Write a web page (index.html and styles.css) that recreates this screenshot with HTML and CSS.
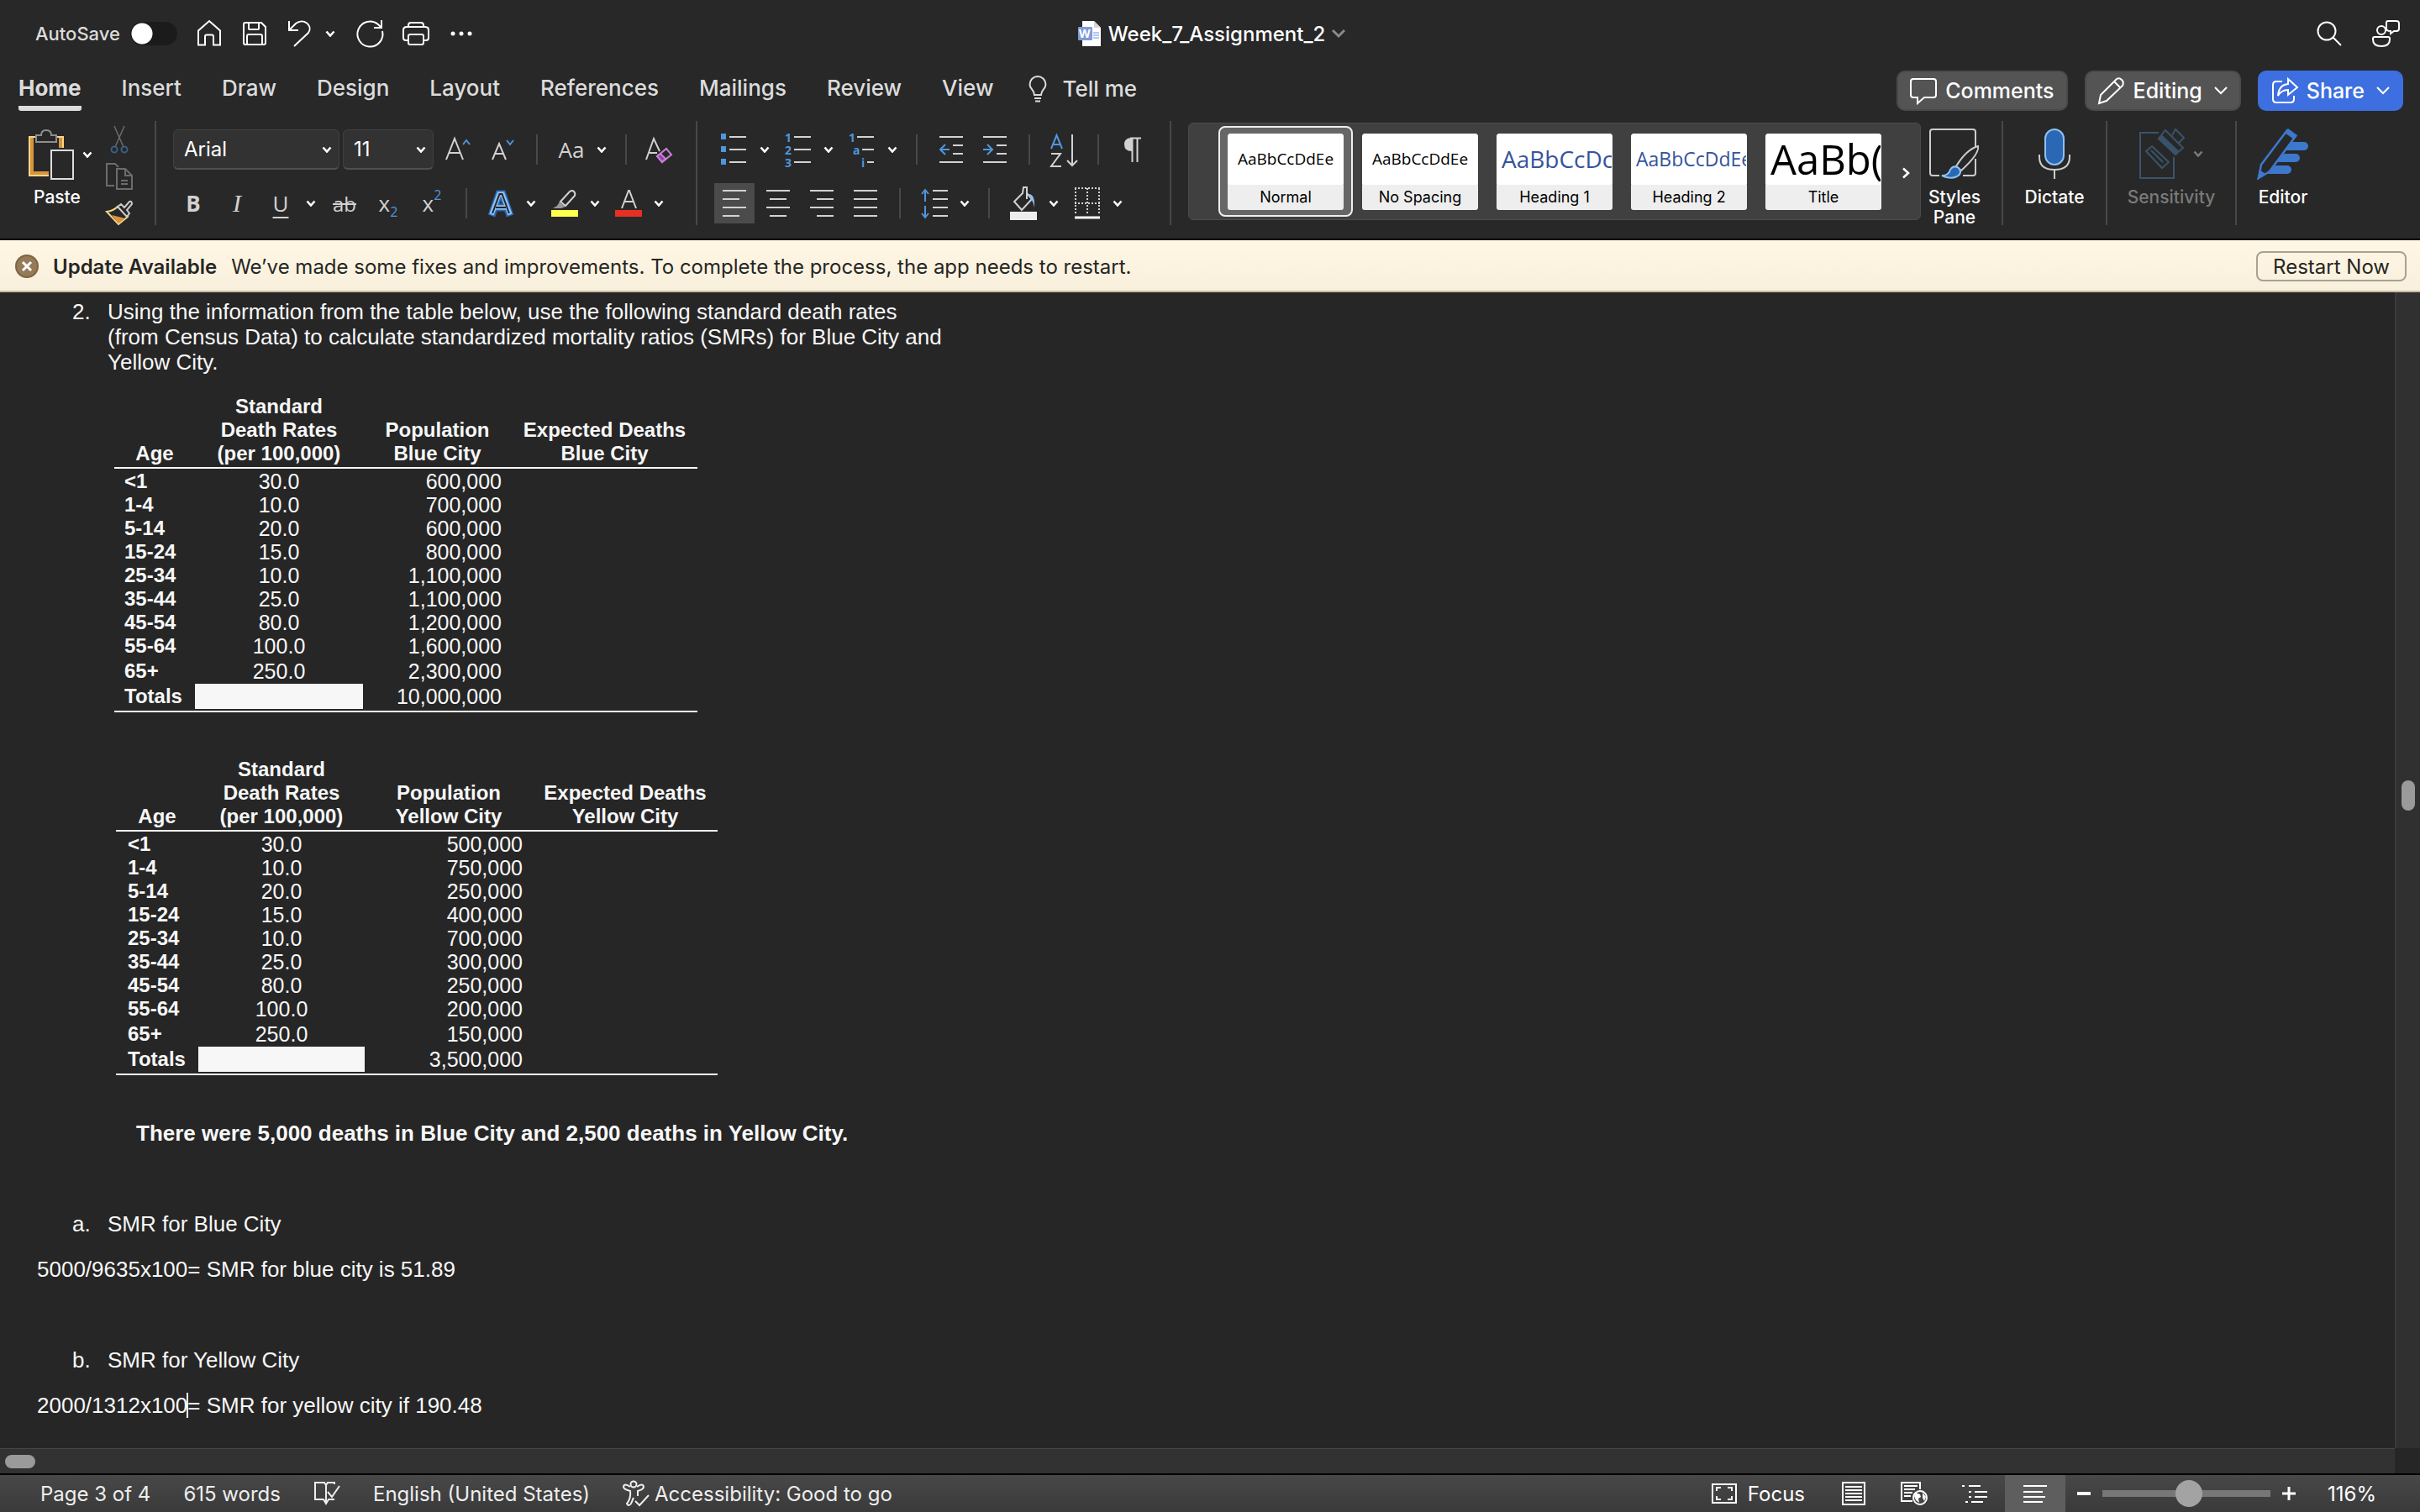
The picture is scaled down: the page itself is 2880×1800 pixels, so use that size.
FILE: index.html
```html
<!DOCTYPE html>
<html lang="en">
<head>
    <meta charset="utf-8">
    <title>Week_7_Assignment_2</title>
    <link rel="stylesheet" href="styles.css">
</head>
<body>
    <svg class="sprite" aria-hidden="true">
        <symbol id="chev" viewBox="0 0 12 8"><path d="M1.5 1.5 6 6.5 10.5 1.5" fill="none" stroke="currentColor" stroke-width="2.6"/></symbol>
    </svg>

    <header class="titlebar">
        <div class="quick">
            <label class="autosave">AutoSave <input type="checkbox"></label>
            <button class="tool" aria-label="Home"><svg width="32" height="32" viewBox="0 0 32 32"><path d="M3 29V12.500L16 1l13 11.500V29.500H21V19.500q0-2-2-2H13q-2 0-2 2v10H3z" /></svg></button>
            <button class="tool" aria-label="Save"><svg width="32" height="32" viewBox="0 0 32 32"><path d="M5 3H24l5 5V27q0 2-2 2H5q-2 0-2-2V5q0-2 2-2zM9 3v7q0 1 1 1H20q1 0 1-1V3M7 29V19q0-2 2-2H23q2 0 2 2V29"/></svg></button>
            <span class="drop undo">
                <button class="tool" aria-label="Undo"><svg width="32" height="32" viewBox="0 0 32 32"><path d="M3 1V12H14M3 12L11 4C20-3 32 6 26 15L9 31"/></svg></button>
                <button class="more" aria-label="Undo list"><svg width="12" height="8"><use href="#chev"/></svg></button>
            </span>
            <button class="tool" aria-label="Repeat"><svg width="34" height="34" viewBox="0 0 34 34"><path d="M32 14A15 15 0 1 1 27 6L31 10M31 1V10H22"/></svg></button>
            <button class="tool" aria-label="Print"><svg width="32" height="32" viewBox="0 0 32 32"><path d="M7 8V6q0-3 3-3H22q3 0 3 3V8M7 24H4q-3 0-3-3V12q0-4 4-4H27q4 0 4 4v9q0 3-3 3H25M9 17H23q2 0 2 2v8q0 2-2 2H9q-2 0-2-2V19q0-2 2-2z"/></svg></button>
            <button class="tool" aria-label="More"><svg width="32" height="32" viewBox="0 0 32 32"><g fill="#fff" stroke="none"><circle cx="6" cy="16" r="2.500"/><circle cx="16" cy="16" r="2.500"/><circle cx="26" cy="16" r="2.500"/></g></svg></button>
        </div>
        <div class="doc-name">
            <svg width="28" height="30" viewBox="0 0 28 30"><path d="M5 0H19l8 8V30H5z" fill="#fff" stroke="none"/><path d="M19 0v8h8z" fill="#d5d5d5" stroke="none"/><rect x="0" y="7" width="17" height="16" rx="1" fill="#7f9bd8" stroke="none"/><path d="M18 14h7M18 17h7M18 20h7" stroke="#5b8fe0" stroke-width="1.200"/><text x="1" y="20" font-weight="700">W</text></svg>
            <span>Week_7_Assignment_2</span>
            <svg class="dim" width="16" height="10" viewBox="0 0 16 10"><path d="M1 1l7 7 7-7" stroke-width="3"/></svg>
        </div>
        <div class="title-right">
            <button class="tool" aria-label="Search"><svg width="32" height="32" viewBox="0 0 32 32"><circle cx="13" cy="13" r="10.500"/><path d="M20.500 20.500 30 30"/></svg></button>
            <button class="tool" aria-label="Presence"><svg width="34" height="34" viewBox="0 0 34 34"><circle cx="12" cy="13" r="5"/><path d="M4 21H20q2 0 2 2v1q0 8-10 8T2 24v-1q0-2 2-2zM20 2H30q3 0 3 3v6q0 3-3 3H27l-4 3V14Q18 14 18 11V4q0-2 2-2z"/></svg></button>
        </div>
    </header>

    <nav class="tabs">
        <a class="tab active" href="#">Home</a>
        <a class="tab" href="#">Insert</a>
        <a class="tab" href="#">Draw</a>
        <a class="tab" href="#">Design</a>
        <a class="tab" href="#">Layout</a>
        <a class="tab" href="#">References</a>
        <a class="tab" href="#">Mailings</a>
        <a class="tab" href="#">Review</a>
        <a class="tab" href="#">View</a>
        <a class="tab tell" href="#"><svg width="22" height="32" viewBox="0 0 22 32"><path d="M7 23C7 17 1.500 16 1.500 10.500a9.500 9.500 0 0 1 19 0C20.500 16 15 17 15 23zM7 27H15M8 30.500H14"/></svg>Tell me</a>
        <div class="actions">
            <button class="action"><svg width="32" height="32" viewBox="0 0 32 32"><path d="M4 2H28q3 0 3 3V21q0 3-3 3H17L9 31V24H4q-3 0-3-3V5q0-3 3-3z"/></svg>Comments</button>
            <button class="action"><svg width="32" height="32" viewBox="0 0 32 32"><path d="M1 31l2-10L22 2q3-2 6 1t1 7L10 28zM19 5l8 8"/></svg>Editing<svg class="down" width="16" height="10" viewBox="0 0 16 10"><path d="M1 1l7 7 7-7"/></svg></button>
            <button class="action share"><svg width="32" height="32" viewBox="0 0 32 32"><path d="M13 5H6Q2 5 2 9V26q0 4 4 4H23q4 0 4-4V22M20 8V2L31 12 20 21V15Q12 15 8 22 9 9 20 8z"/></svg>Share<svg class="down" width="16" height="10" viewBox="0 0 16 10"><path d="M1 1l7 7 7-7"/></svg></button>
        </div>
    </nav>

    <section class="ribbon">
        <div class="group clipboard">
            <button class="paste">
                <span class="paste-icon">
                    <svg width="54" height="60" viewBox="0 0 54 60"><path d="M24 55H1V9H41V22" stroke="#f5d78c"/><path d="M24 52H4V10M38 10V22" stroke="#d9943d" stroke-width="4"/><path d="M9 15V7h6Q15 1 21 1t6 6h6v8z" fill="#282828" stroke="#8e8e8e"/><rect x="27" y="25" width="26" height="34" fill="#282828" stroke="#ddd"/></svg>
                    <svg class="white" width="12" height="8"><use href="#chev"/></svg>
                </span>
                <span>Paste</span>
            </button>
            <div class="stack">
                <button class="tool" aria-label="Cut"><svg width="32" height="32" viewBox="0 0 32 32"><path d="M10 0l11 25M22 0L11 25" stroke="#6c6c6c" stroke-width="1.500"/><g stroke="#3b5f80"><circle cx="10" cy="28" r="3.500"/><circle cx="22" cy="28" r="3.500"/></g></svg></button>
                <button class="tool" aria-label="Copy"><svg width="32" height="32" viewBox="0 0 32 32"><path d="M10 27H1V1H11l4 4M13 7H23l8 8V31H13zM23 7v8h8M18 21h8M18 25h8" stroke="#6c6c6c"/></svg></button>
                <button class="tool" aria-label="Format Painter"><svg width="32" height="32" viewBox="0 0 32 32"><path d="M1 14q8-1 13-6l12 12q-5 4-11 9z" fill="#282828" stroke="#f5d78c"/><path d="M7 18l16 4-8 6z" fill="#d9943d" stroke="none"/><path d="M14 8l4-3 4 4 6-7q3-1 3 3l-6 7 3 4-3 4z" fill="#282828" stroke="#ccc"/></svg></button>
            </div>
        </div>

        <div class="group font">
            <div class="row">
                <div class="pickers">
                    <span class="picker name"><select aria-label="Font"><option>Arial</option></select><svg width="12" height="8"><use href="#chev"/></svg></span>
                    <span class="picker size"><select aria-label="Font size"><option>11</option></select><svg width="12" height="8"><use href="#chev"/></svg></span>
                </div>
                <button class="tool" aria-label="Grow font"><svg width="32" height="32" viewBox="0 0 32 32"><path d="M1 28 11 3 21 28M5 20H17"/><path d="M21 10l4-5 4 5" class="blue"/></svg></button>
                <button class="tool" aria-label="Shrink font"><svg width="32" height="32" viewBox="0 0 32 32"><path d="M4 28 12 9 20 28M7 21H17"/><path d="M21 5l4 5 4-5" class="blue"/></svg></button>
                <i class="sep"></i>
                <span class="drop"><button class="tool letter">Aa</button><button class="more" aria-label="Change case"><svg width="12" height="8"><use href="#chev"/></svg></button></span>
                <i class="sep"></i>
                <button class="tool" aria-label="Clear formatting"><svg width="32" height="32" viewBox="0 0 32 32"><path d="M-1 28 8 3 15 18M3 20H12"/><path d="M12 24 23 15l6 7-11 9z" stroke="#c77fd8"/><path d="M12 24l4-3 6 6-4 4z" fill="#93419f" stroke="#c77fd8"/></svg></button>
            </div>
            <div class="row second">
                <button class="tool letter bold">B</button>
                <button class="tool letter italic">I</button>
                <span class="drop"><button class="tool letter under">U</button><button class="more" aria-label="Underline styles"><svg width="12" height="8"><use href="#chev"/></svg></button></span>
                <button class="tool letter strike">ab</button>
                <button class="tool letter script">x<sub>2</sub></button>
                <button class="tool letter script">x<sup>2</sup></button>
                <i class="sep"></i>
                <span class="drop"><button class="tool" aria-label="Text effects"><svg width="32" height="32" viewBox="0 0 32 32"><path d="M5 31 14 5h4l9 26M10 21H22" stroke="#2a67b5" stroke-width="9"/><path d="M5 29.500 14 5h4l9 24.500M10 21H22" stroke="#8fc1f0" stroke-width="5.500"/><path d="M6 28 14.500 5h3L26 28M10 21H22" stroke="#282828" stroke-width="2"/></svg></button><button class="more" aria-label="Effects list"><svg width="12" height="8"><use href="#chev"/></svg></button></span>
                <span class="drop"><button class="tool" aria-label="Highlight"><svg width="32" height="32" viewBox="0 0 32 32"><path d="M11 14 22 2q3-2 5 0t1 5L17 19z"/><path d="M10 14l7 6-5 2H2l5-3z" fill="#999" stroke="none"/><path d="M0 24H32V32H0z" fill="#ffff4d" stroke="none"/></svg></button><button class="more" aria-label="Highlight colours"><svg width="12" height="8"><use href="#chev"/></svg></button></span>
                <span class="drop"><button class="tool" aria-label="Font colour"><svg width="32" height="32" viewBox="0 0 32 32"><path d="M8 22 16 1h1L25 22M11 14H22"/><path d="M0 24H32V32H0z" fill="#e63022" stroke="none"/></svg></button><button class="more" aria-label="Font colours"><svg width="12" height="8"><use href="#chev"/></svg></button></span>
            </div>
        </div>

        <div class="group para">
            <div class="row">
                <span class="drop"><button class="tool" aria-label="Bullets"><svg width="32" height="32" viewBox="0 0 32 32"><path d="M10 1H30M10 16H30M10 31H30"/><path d="M0-3h6v7H0zM0 12h6v7H0zM0 27h6v7H0z" fill="#4f96dc" stroke="none"/></svg></button><button class="more" aria-label="Bullet library"><svg width="12" height="8"><use href="#chev"/></svg></button></span>
                <span class="drop"><button class="tool" aria-label="Numbering"><svg width="32" height="32" viewBox="0 0 32 32"><path d="M11 1H31M11 16H31M11 31H31"/><text x="0" y="7">1</text><text x="0" y="22">2</text><text x="0" y="37">3</text></svg></button><button class="more" aria-label="Numbering library"><svg width="12" height="8"><use href="#chev"/></svg></button></span>
                <span class="drop"><button class="tool" aria-label="Multilevel list"><svg width="32" height="32" viewBox="0 0 32 32"><path d="M10 1H30M16 16H30M22 31H30"/><text x="0" y="7">1</text><text x="5" y="22">a</text><text x="15" y="37">i</text></svg></button><button class="more" aria-label="List library"><svg width="12" height="8"><use href="#chev"/></svg></button></span>
                <i class="sep"></i>
                <button class="tool" aria-label="Decrease indent"><svg width="32" height="32" viewBox="0 0 32 32"><path d="M2 1H30M18 11H30M18 21H30M2 31H30"/><path d="M14 16H3M9 10l-6 6 6 6" class="blue"/></svg></button>
                <button class="tool" aria-label="Increase indent"><svg width="32" height="32" viewBox="0 0 32 32"><path d="M2 1H30M18 11H30M18 21H30M2 31H30"/><path d="M2 16H13M7 10l6 6-6 6" class="blue"/></svg></button>
                <i class="sep"></i>
                <button class="tool" aria-label="Sort"><svg width="32" height="40" viewBox="0 0 32 40"><path d="M1 19 7.500 3 14 19M4 14H12" class="blue"/><path d="M1 25H12L1 40H13M26 2V39M20 33l6 6 6-6"/></svg></button>
                <i class="sep"></i>
                <button class="tool" aria-label="Show marks"><svg width="32" height="32" viewBox="0 0 32 32"><path d="M15 2q-9 0-9 8t9 8z" fill="#d2d2d2" stroke="none"/><path d="M13 2.500H26M15.500 2V31M21.500 2V31"/></svg></button>
            </div>
            <div class="row">
                <button class="tool on" aria-label="Align left"><svg width="32" height="32" viewBox="0 0 32 32"><path d="M2 1H30M2 11H22M2 21H30M2 31H22"/></svg></button>
                <button class="tool" aria-label="Center"><svg width="32" height="32" viewBox="0 0 32 32"><path d="M2 1H30M6 11H26M2 21H30M6 31H26"/></svg></button>
                <button class="tool" aria-label="Align right"><svg width="32" height="32" viewBox="0 0 32 32"><path d="M2 1H30M10 11H30M2 21H30M10 31H30"/></svg></button>
                <button class="tool" aria-label="Justify"><svg width="32" height="32" viewBox="0 0 32 32"><path d="M2 1H30M2 11H30M2 21H30M2 31H30"/></svg></button>
                <i class="sep"></i>
                <span class="drop"><button class="tool" aria-label="Line spacing"><svg width="32" height="32" viewBox="0 0 32 32"><path d="M14 1H32M14 11H32M14 21H32M14 31H32"/><path d="M5 14V0M1 5l4-5 4 5M5 19V33M1 28l4 5 4-5" class="blue"/></svg></button><button class="more" aria-label="Spacing list"><svg width="12" height="8"><use href="#chev"/></svg></button></span>
                <i class="sep"></i>
                <span class="drop"><button class="tool" aria-label="Shading"><svg width="32" height="40" viewBox="0 0 32 40"><path d="M15 8 5 18 14 28 26 15 20 8V1h-4z M20 1V15"/><path d="M22 9q8 0 7 16-2-9-4-9z" fill="#8fc1f0" stroke="none"/><path d="M0 30H32V40H0z" fill="#eee" stroke="none"/></svg></button><button class="more" aria-label="Shading colours"><svg width="12" height="8"><use href="#chev"/></svg></button></span>
                <span class="drop"><button class="tool" aria-label="Borders"><svg width="32" height="40" viewBox="0 0 32 40"><path d="M1 2H31M1 20H31M2 2V34M16 2V34M30 2V34" stroke-dasharray="2 2"/><path d="M1 37H31" stroke="#fff" stroke-width="3"/></svg></button><button class="more" aria-label="Border list"><svg width="12" height="8"><use href="#chev"/></svg></button></span>
            </div>
        </div>

        <div class="gallery">
            <button class="style selected"><span class="preview">AaBbCcDdEe</span><span class="label">Normal</span></button>
            <button class="style"><span class="preview">AaBbCcDdEe</span><span class="label">No Spacing</span></button>
            <button class="style h1"><span class="preview">AaBbCcDc</span><span class="label">Heading 1</span></button>
            <button class="style h2"><span class="preview">AaBbCcDdEe</span><span class="label">Heading 2</span></button>
            <button class="style title"><span class="preview">AaBb(</span><span class="label">Title</span></button>
            <button class="next" aria-label="More styles"><svg width="10" height="14" viewBox="0 0 10 14"><path d="M2 1.500 8 7l-6 5.500" stroke="#fff" stroke-width="2.600"/></svg></button>
        </div>

        <button class="big styles-pane">
            <svg width="60" height="60" viewBox="0 0 60 60"><path d="M12 56H4q-3 0-3-3V4q0-3 3-3H52q3 0 3 3V22M55 36V53q0 3-3 3H40" stroke="#ccc"/><path d="M32 45Q44 25 58 21 60 30 38 50z" fill="#282828" stroke="#ccc"/><path d="M15 56q8 0 10-7 4-6 10-2 5 6-2 10-8 4-18-1z" fill="#2a67b5" stroke="#8fc1f0"/></svg>
            Styles<br>Pane
        </button>
        <button class="big dictate">
            <svg width="40" height="60" viewBox="0 0 40 60"><rect x="9" y="1" width="22" height="42" rx="11" fill="#2a67b5" stroke="#8fc1f0"/><path d="M2 31v3q0 15 18 15t18-15v-3M20 49V60" stroke="#ccc"/></svg>
            Dictate
        </button>
        <button class="big sensitivity" disabled>
            <span class="with-more"><svg width="54" height="60" viewBox="0 0 54 60"><g stroke="#3a536b"><path d="M23 5H1V59H41V34M15 21 35 40 27 47 8 27zM14 26 28 40M31 2 52 23 43 31 23 12zM39 8 43 1 53 11 47 17"/><path d="M23 12 27 9 46 27 43 31z" fill="#3a536b"/></g></svg><svg width="12" height="8"><use href="#chev"/></svg></span>
            Sensitivity
        </button>
        <button class="big editor">
            <svg width="62" height="60" viewBox="0 0 62 60"><path d="M40 16H56a5 5 0 0 1 0 10H32zM32 30H46a5 5 0 0 1 0 10H23zM22 44H36a5 5 0 0 1 0 10H12z" fill="#3d78cc" stroke="none"/><path d="M2 59 5 43 36 2l10 7-31 42z" fill="#282828" stroke="#3d78cc" stroke-width="2.500"/><path d="M33 5 37 0l11 8-4 5zM0 61l3-12 7 5z" fill="#3d78cc" stroke="none"/></svg>
            Editor
        </button>
    </section>

    <div class="banner">
        <button class="dismiss" aria-label="Dismiss"><svg width="28" height="28" viewBox="0 0 28 28"><circle cx="14" cy="14" r="13" fill="#967b58" stroke="#7d6444"/><path d="M9 9l10 10M19 9 9 19" stroke="#fff" stroke-width="3"/></svg></button>
        <strong>Update Available</strong>
        <span>We’ve made some fixes and improvements. To complete the process, the app needs to restart.</span>
        <button class="restart">Restart Now</button>
    </div>

    <main class="workspace">
        <article class="document">
            <div class="item"><span class="marker">2.</span><p>Using the information from the table below, use the following standard death rates<br>(from Census Data) to calculate standardized mortality ratios (SMRs) for Blue City and<br>Yellow City.</p></div>

            <table class="rates blue-city">
                <thead><tr><th>Age</th><th>Standard<br>Death Rates<br>(per 100,000)</th><th>Population<br>Blue City</th><th>Expected Deaths<br>Blue City</th></tr></thead>
                <tbody>
                    <tr><th>&lt;1</th><td>30.0</td><td>600,000</td><td></td></tr>
                    <tr><th>1-4</th><td>10.0</td><td>700,000</td><td></td></tr>
                    <tr><th>5-14</th><td>20.0</td><td>600,000</td><td></td></tr>
                    <tr><th>15-24</th><td>15.0</td><td>800,000</td><td></td></tr>
                    <tr><th>25-34</th><td>10.0</td><td>1,100,000</td><td></td></tr>
                    <tr><th>35-44</th><td>25.0</td><td>1,100,000</td><td></td></tr>
                    <tr><th>45-54</th><td>80.0</td><td>1,200,000</td><td></td></tr>
                    <tr><th>55-64</th><td>100.0</td><td>1,600,000</td><td></td></tr>
                    <tr class="tall"><th>65+</th><td>250.0</td><td>2,300,000</td><td></td></tr>
                    <tr class="totals"><th>Totals</th><td><div class="blank"></div></td><td>10,000,000</td><td></td></tr>
                </tbody>
            </table>

            <table class="rates yellow-city">
                <thead><tr><th>Age</th><th>Standard<br>Death Rates<br>(per 100,000)</th><th>Population<br>Yellow City</th><th>Expected Deaths<br>Yellow City</th></tr></thead>
                <tbody>
                    <tr><th>&lt;1</th><td>30.0</td><td>500,000</td><td></td></tr>
                    <tr><th>1-4</th><td>10.0</td><td>750,000</td><td></td></tr>
                    <tr><th>5-14</th><td>20.0</td><td>250,000</td><td></td></tr>
                    <tr><th>15-24</th><td>15.0</td><td>400,000</td><td></td></tr>
                    <tr><th>25-34</th><td>10.0</td><td>700,000</td><td></td></tr>
                    <tr><th>35-44</th><td>25.0</td><td>300,000</td><td></td></tr>
                    <tr><th>45-54</th><td>80.0</td><td>250,000</td><td></td></tr>
                    <tr><th>55-64</th><td>100.0</td><td>200,000</td><td></td></tr>
                    <tr class="tall"><th>65+</th><td>250.0</td><td>150,000</td><td></td></tr>
                    <tr class="totals"><th>Totals</th><td><div class="blank"></div></td><td>3,500,000</td><td></td></tr>
                </tbody>
            </table>

            <p class="note">There were 5,000 deaths in Blue City and 2,500 deaths in Yellow City.</p>

            <div class="item sub"><span class="marker">a.</span><p>SMR for Blue City</p></div>
            <p class="answer">5000/9635x100= SMR for blue city is 51.89</p>
            <div class="item sub"><span class="marker">b.</span><p>SMR for Yellow City</p></div>
            <p class="answer">2000/1312x100<span class="caret"></span>= SMR for yellow city if 190.48</p>
        </article>
        <div class="vscroll"><div class="thumb"></div></div>
        <div class="hscroll"><div class="thumb"></div></div>
    </main>

    <footer class="status">
        <span>Page 3 of 4</span>
        <span class="words">615 words</span>
        <button class="proof" aria-label="Proofing"><svg width="32" height="30" viewBox="0 0 32 30"><path d="M25 4V2H17l-2 3-2-3H2V22H12l3 5 3-5H25M15 5V26M17 13l5 6 9-13"/></svg></button>
        <span>English (United States)</span>
        <button class="access"><svg width="32" height="32" viewBox="0 0 32 32"><circle cx="13" cy="5" r="3.500"/><path d="M9 8Q2 3 1 8q0 3 8 5 1 9-4 15 2 4 5 0l3-7M17 8q7-5 8 0 0 3-7 5v6M15 25l5 5L31 18"/></svg>Accessibility: Good to go</button>
        <div class="views">
            <button class="focus"><svg width="32" height="26" viewBox="0 0 32 26"><path d="M2 2H30V24H2zM7 10V6h5M20 6h5v4M25 16v4h-5M12 20H7V16"/></svg>Focus</button>
            <button class="view" aria-label="Print layout"><svg width="28" height="28" viewBox="0 0 28 28"><path d="M1 1H27V27H1zM4 6H24M4 10H24M4 14H24M4 18H24M4 22H24"/></svg></button>
            <button class="view" aria-label="Web layout"><svg width="32" height="28" viewBox="0 0 32 28"><path d="M14 23H1V1H23V9M4 5H20M4 9H17M4 13H14M4 17H12"/><circle cx="23" cy="19" r="8" fill="#444" stroke-width="2"/><path d="M18 13l5 2 1 3-3 2 1 5-4-3-2-5zM26 13l4 5-2 5-2-4z" fill="#fff" stroke="none"/></svg></button>
            <button class="view" aria-label="Outline"><svg width="32" height="28" viewBox="0 0 32 28"><path d="M1 5H4M9 5H23M9 12H12M16 12H31M9 18H12M16 18H31M5 24H8M12 24H26"/></svg></button>
            <button class="view on" aria-label="Draft"><svg width="28" height="28" viewBox="0 0 28 28"><path d="M0 5H28M0 12H23M0 18H26M0 24H23"/></svg></button>
            <button class="step" aria-label="Zoom out"><svg width="16" height="16" viewBox="0 0 16 16"><path d="M0 8H16" stroke-width="4"/></svg></button>
            <input class="zoom" type="range" min="0" max="100" value="52" aria-label="Zoom">
            <button class="step" aria-label="Zoom in"><svg width="16" height="16" viewBox="0 0 16 16"><path d="M0 8H16M8 0V16" stroke-width="3"/></svg></button>
            <span class="percent">116%</span>
        </div>
    </footer>
</body>
</html>
```
FILE: styles.css
```css
* {
    box-sizing: border-box;
}
body {
    margin: 0;
    height: 100vh;
    display: flex;
    flex-direction: column;
    background: #282828;
    color: #e0e0e0;
    font-family: Inter, "Liberation Sans", sans-serif;
    font-size: 22px;
    white-space: nowrap;
    overflow: hidden;
}
button, select {
    font: inherit;
    color: inherit;
    background: none;
    border: none;
    padding: 0;
}
svg {
    display: block;
    flex: none;
    overflow: visible;
    fill: none;
    stroke: currentColor;
    stroke-width: 2;
}
svg text {
    fill: #4f96dc;
    stroke: none;
    font-family: "Open Sans", sans-serif;
    font-size: 14px;
    font-weight: 700;
}
.sprite {
    display: none;
}
p {
    margin: 0;
}

/* title bar */
.titlebar {
    height: 80px;
    display: grid;
    grid-template-columns: 1fr auto 1fr;
    align-items: center;
    padding: 0 24px 0 42px;
    color: #fff;
}
.quick {
    display: flex;
    align-items: center;
    gap: 22px;
}
.autosave {
    display: flex;
    align-items: center;
    gap: 12px;
    color: #dcdcdc;
    font-size: 22px;
    font-weight: 500;
}
.autosave input {
    appearance: none;
    width: 56px;
    height: 28px;
    margin: 0;
    border-radius: 14px;
    background: radial-gradient(circle at 14px 14px, #fff 12px, #1b1b1b 13px);
}
.doc-name {
    display: flex;
    align-items: center;
    gap: 8px;
    margin-right: 14px;
    font-size: 24px;
    font-weight: 500;
}
.doc-name text {
    fill: #fff;
}
.dim {
    color: #8a8a8a;
}
.title-right {
    display: flex;
    justify-content: flex-end;
    gap: 34px;
}

/* tabs */
.tabs {
    height: 64px;
    display: flex;
    padding: 0 20px 0 22px;
    gap: 48px;
    font-size: 26px;
    font-weight: 500;
}
.tab {
    height: 52px;
    line-height: 50px;
    color: #dcdcdc;
    text-decoration: none;
}
.tab.active {
    font-weight: 700;
    border-bottom: 6px solid #dcdcdc;
    border-radius: 3px;
}
.tell {
    display: flex;
    align-items: center;
    gap: 18px;
    margin-left: -6px;
}
.actions {
    display: flex;
    gap: 20px;
    margin: 4px 0 0 auto;
    font-size: 25px;
}
.action {
    height: 48px;
    display: flex;
    align-items: center;
    gap: 10px;
    padding: 0 14px;
    border-radius: 10px;
    background: #545454;
    border: 2px solid #4a4a4a;
    color: #fff;
}
.share {
    background: #3d6fe0;
    border-color: #3d6fe0;
}
.down {
    margin-left: 4px;
}

/* ribbon */
.ribbon {
    display: flex;
    height: 142px;
    padding: 0 108px 16px 0;
    border-bottom: 2px solid #000;
    color: #d2d2d2;
}
.group {
    flex: none;
    border-right: 2px solid #484848;
}
.row {
    display: flex;
    align-items: center;
    gap: 20px;
    height: 48px;
}
.row + .row {
    margin-top: 16px;
}
.font {
    padding: 10px 26px 0 20px;
}
.para {
    padding: 10px 28px 0;
}
.second {
    padding-left: 8px;
}
.clipboard {
    display: flex;
    padding: 6px 26px 0 34px;
    gap: 16px;
}
.paste {
    color: #fff;
    text-align: left;
    display: flex;
    flex-direction: column;
    padding-top: 4px;
    gap: 8px;
    font-weight: 500;
    font-size: 21px;
}
.paste span + span {
    padding-left: 6px;
}
.paste-icon, .with-more {
    display: flex;
    align-items: center;
    gap: 10px;
}
.stack {
    display: flex;
    flex-direction: column;
    gap: 12px;
}
.tool {
    min-width: 32px;
    height: 32px;
    display: flex;
    align-items: center;
    justify-content: center;
}
.tool.on {
    outline: 8px solid #4b4b4b;
    background: #4b4b4b;
}
.drop {
    display: flex;
    align-items: center;
    gap: 14px;
    margin-right: -2px;
}
.more, .white {
    color: #fff;
}
.undo {
    margin-right: 2px;
}
.sep {
    width: 2px;
    height: 36px;
    margin: 0 4px;
    background: #484848;
}
.blue {
    stroke: #4f96dc;
}
.pickers {
    display: flex;
    gap: 4px;
    margin-right: -6px;
}
.picker {
    display: flex;
    align-items: center;
    height: 48px;
    padding: 0 8px 0 12px;
    border: 1px solid #404040;
    border-bottom: 2px solid #505050;
    border-radius: 6px;
    background: #323232;
    color: #fff;
    font-size: 24px;
}
.picker select {
    appearance: none;
    flex: 1;
}
.name {
    width: 198px;
}
.size {
    width: 108px;
}
.letter {
    width: 32px;
    font-family: "Open Sans", sans-serif;
    font-size: 26px;
}
.bold {
    font-weight: 700;
}
.italic {
    font-family: "Liberation Serif", serif;
    font-style: italic;
    font-size: 30px;
}
.under {
    text-decoration: underline;
    text-underline-offset: 6px;
}
.strike {
    text-decoration: line-through;
    font-size: 24px;
}
.script sub, .script sup {
    color: #4f96dc;
    font-size: 16px;
    line-height: 12px;
}
.script sub {
    align-self: flex-end;
}
.script sup {
    align-self: flex-start;
}
.gallery {
    flex: 1;
    height: 116px;
    margin: 2px 0 0 20px;
    padding: 3px 0 0 35px;
    display: flex;
    overflow: hidden;
    background: #404040;
    border: 1px solid #4c4c4c;
    border-radius: 6px;
}
.style {
    flex: none;
    width: 160px;
    height: 108px;
    padding: 9px 11px;
    color: #000;
}
.selected {
    padding: 7px 9px;
    border: 2px solid #eee;
    border-radius: 8px;
    background: #666;
}
.preview, .label {
    display: block;
}
.preview {
    height: 61px;
    padding: 0 5px;
    line-height: 58px;
    font-family: "Open Sans", sans-serif;
    font-size: 19px;
    overflow: hidden;
    text-align: center;
    background: #fff;
    border: 1px solid #fff;
    border-radius: 3px 3px 0 0;
}
.h1 .preview, .h2 .preview, .title .preview {
    text-align: left;
    color: #34549b;
}
.h1 .preview {
    font-size: 28px;
}
.h2 .preview {
    font-size: 23px;
}
.title .preview {
    font-size: 49px;
    color: #000;
}
.label {
    height: 30px;
    line-height: 30px;
    font-size: 18px;
    background: #eee;
    border-radius: 0 0 3px 3px;
}
.next {
    margin: 0 0 0 13px;
}
.big {
    flex: none;
    display: flex;
    flex-direction: column;
    align-items: center;
    padding-top: 9px;
    height: 124px;
    line-height: 24px;
    color: #fff;
    font-size: 21px;
    font-weight: 500;
    border-right: 2px solid #484848;
}
.big > :first-child {
    height: 60px;
    margin-bottom: 10px;
}
.styles-pane {
    width: 98px;
    padding-right: 16px;
}
.dictate {
    width: 124px;
}
.sensitivity {
    width: 154px;
    color: #7a7a7a;
}
.editor {
    width: 110px;
    border: none;
}

/* update banner */
.banner {
    height: 62px;
    flex: none;
    display: flex;
    align-items: center;
    gap: 17px;
    padding: 2px 16px 0 18px;
    background: linear-gradient(#fff7e3, #f8f0dc);
    border-bottom: 2px solid #c4bda8;
    color: #262626;
    font-size: 24px;
}
.banner strong {
    font-weight: 600;
}
.restart {
    height: 36px;
    margin-left: auto;
    padding: 0 18px;
    border: 2px solid #a9a294;
    border-radius: 8px;
}

/* document */
.workspace {
    flex: 1;
    min-height: 0;
    display: grid;
    grid-template-columns: 1fr 30px;
    grid-template-rows: 1fr 30px;
    background: #262626;
}
.document {
    padding: 8px 44px;
    color: #f7f7f7;
    font-family: "Liberation Sans", Arial, sans-serif;
    font-size: 26px;
    line-height: 30px;
    overflow: hidden;
}
.item {
    display: flex;
    padding-left: 42px;
}
.marker {
    width: 42px;
}
.sub {
    margin-top: 78px;
}
.answer {
    margin-top: 24px;
}
.caret {
    display: inline-block;
    width: 2px;
    height: 30px;
    margin: 0 -1px;
    vertical-align: bottom;
    background: #fff;
}
.note {
    margin: 54px 0 0 118px;
    font-weight: 700;
}
.rates {
    table-layout: fixed;
    border-collapse: separate;
    border-spacing: 0;
    font-size: 25px;
    line-height: 28px;
}
.rates th, .rates td {
    padding: 0;
    text-align: center;
}
.rates th {
    font-size: 24px;
}
.rates thead th {
    vertical-align: bottom;
    padding-bottom: 2px;
    border-bottom: 2px solid #f7f7f7;
}
.rates tbody th {
    padding-left: 12px;
    text-align: left;
}
.rates tbody tr:first-child > * {
    padding-top: 1px;
}
.rates td:nth-child(3) {
    padding-right: 12px;
    text-align: right;
}
.rates .tall {
    height: 31px;
}
.rates .totals {
    height: 34px;
    line-height: 30px;
    vertical-align: top;
}
.totals th, .totals td {
    border-bottom: 2px solid #f7f7f7;
}
.blank {
    height: 30px;
    background: #f7f7f7;
}
.blue-city {
    width: 694px;
    margin: 24px 0 0 92px;
}
.blue-city th:nth-child(1) {
    width: 96px;
}
.blue-city th:nth-child(2) {
    width: 200px;
}
.blue-city th:nth-child(3) {
    width: 177px;
}
.yellow-city {
    width: 716px;
    margin: 54px 0 0 94px;
}
.yellow-city tbody th {
    padding-left: 14px;
}
.yellow-city th:nth-child(1) {
    width: 98px;
}
.yellow-city th:nth-child(2) {
    width: 198px;
}
.yellow-city th:nth-child(3) {
    width: 200px;
}
.vscroll {
    display: flex;
    justify-content: center;
    align-items: flex-start;
    padding-top: 581px;
    background: #303030;
    border-left: 2px solid #3a3a3a;
}
.hscroll {
    display: flex;
    align-items: center;
    padding-left: 6px;
    background: #323232;
    border-top: 1px solid #464646;
}
.thumb {
    width: 16px;
    height: 36px;
    border-radius: 8px;
    background: #9a9a9a;
}
.hscroll .thumb {
    width: 36px;
    height: 16px;
}

/* status bar */
.status {
    height: 46px;
    flex: none;
    display: flex;
    align-items: center;
    gap: 39px;
    padding-left: 48px;
    border-top: 2px solid #000;
    background: linear-gradient(#484848, #3a3a3a);
    color: #eee;
    font-size: 24px;
}
.access, .focus {
    display: flex;
    align-items: center;
    gap: 6px;
}
.focus {
    gap: 12px;
    margin-right: 22px;
}
.views {
    display: flex;
    align-items: center;
    align-self: stretch;
    margin-left: auto;
    padding-right: 52px;
    color: #fff;
}
.view {
    width: 72px;
    height: 44px;
    display: flex;
    align-items: center;
    justify-content: center;
}
.view.on {
    background: #5e5e5e;
}
.step {
    margin: 0 14px;
}
.zoom {
    appearance: none;
    width: 200px;
    height: 32px;
    margin: 0;
    border-radius: 4px;
    background: linear-gradient(#777, #777) center / 100% 8px no-repeat;
}
.zoom::-webkit-slider-thumb {
    appearance: none;
    width: 32px;
    height: 32px;
    border-radius: 16px;
    background: #a3a3a3;
}
.percent {
    margin-left: 24px;
}
```
